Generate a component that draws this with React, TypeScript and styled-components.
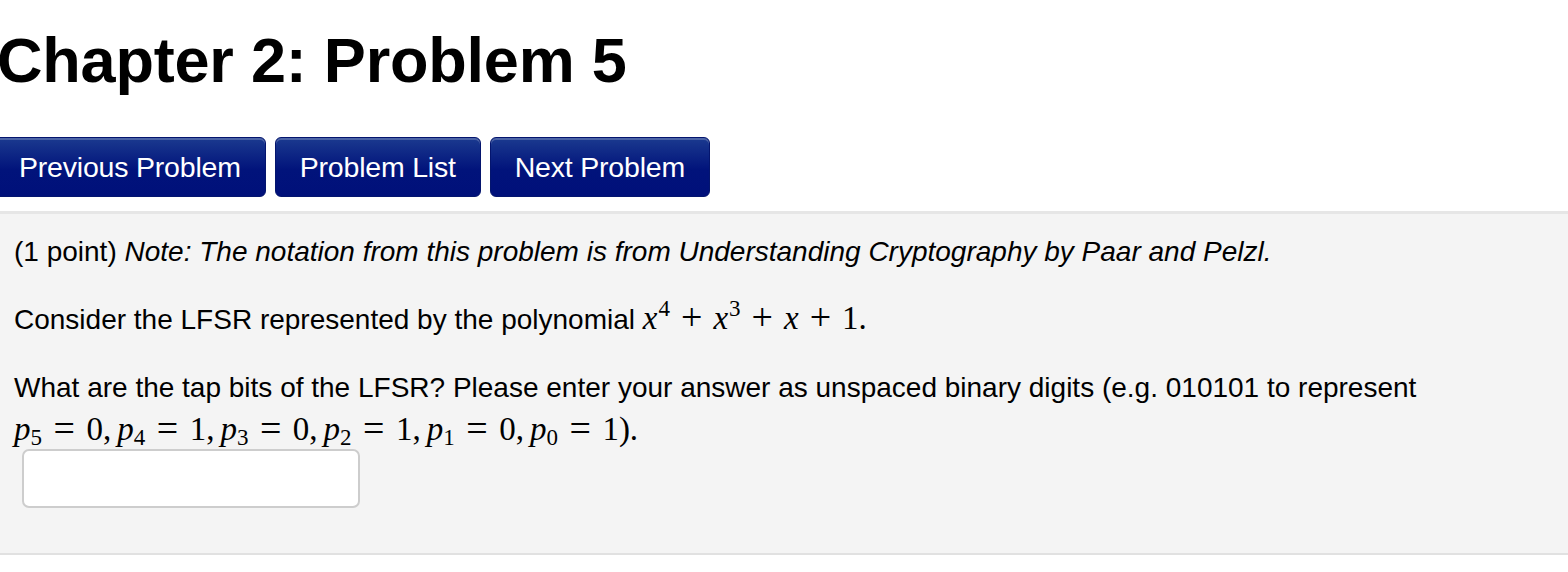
import React from "react";
import styled, { createGlobalStyle } from "styled-components";

const Global = createGlobalStyle`
  html, body { margin: 0; padding: 0; background: #ffffff; }
  body { font-family: "Liberation Sans", Arial, Helvetica, sans-serif; color: #000; overflow: hidden; }
`;

const Page = styled.div`
  width: 1568px;
  height: 572px;
  overflow: hidden;
  background: #fff;
`;

const Heading = styled.h1`
  margin: 0 0 0 -3px;
  padding-top: 22px;
  height: 115px;
  box-sizing: border-box;
  font-size: 63px;
  line-height: 76px;
  font-weight: 700;
  letter-spacing: -0.2px;
`;

const NavBar = styled.nav`
  display: flex;
  gap: 9px;
  margin-left: -6px;
  height: 96px;
  padding-top: 22px;
  box-sizing: border-box;
`;

const NavButton = styled.button`
  height: 60px;
  padding: 0 24px;
  border-radius: 6px;
  border: 1px solid #04156e;
  background: linear-gradient(#1b3a8f, #01137b 55%, #00107a);
  box-shadow: inset 0 2px 0 rgba(255, 255, 255, 0.22);
  color: #fff;
  font-family: "Liberation Sans", Arial, sans-serif;
  font-size: 28.5px;
  letter-spacing: -0.2px;
  cursor: pointer;
`;

const Panel = styled.section`
  background: #f4f4f4;
  border-top: 3px solid #e6e6e6;
  border-bottom: 2px solid #e1e1e1;
  padding: 18px 0 46px 14px;
  height: 344px;
  box-sizing: border-box;
`;

const Para = styled.p`
  margin: 0 0 28px 0;
  font-size: 28px;
  line-height: 40px;
`;

const TightPara = styled(Para)`
  margin-bottom: 0;
`;

const Em = styled.em`
  font-style: italic;
`;

const Math = styled.span<{ $shift?: number }>`
  font-family: "Liberation Serif", "Times New Roman", serif;
  font-size: 33px;
  line-height: 1;
  white-space: nowrap;
  vertical-align: ${(p) => -(p.$shift ?? 0)}px;
`;

const Var = styled.i`
  font-style: italic;
`;

const Sup = styled.sup`
  font-size: 23px;
  vertical-align: 13px;
  line-height: 0;
  margin-left: 1px;
`;

const Sub = styled.sub`
  font-size: 23px;
  vertical-align: -5px;
  line-height: 0;
`;

const Op = styled.span<{ $w?: number }>`
  font-size: 38px;
  line-height: 0;
  vertical-align: -1px;
  margin: 0 ${(p) => p.$w ?? 12}px;
`;

const Comma = styled.span`
  margin-right: 6px;
`;

const AnswerInput = styled.input`
  display: block;
  margin: 1px 0 0 8px;
  width: 338px;
  height: 59px;
  box-sizing: border-box;
  border: 2px solid #cdcdcd;
  border-radius: 7px;
  background: #fff;
  outline: none;
`;

const eqs: [string, string][] = [
  ["5", "0"],
  ["4", "1"],
  ["3", "0"],
  ["2", "1"],
  ["1", "0"],
  ["0", "1"],
];

export default function App() {
  return (
    <Page>
      <Global />
      <Heading>Chapter 2: Problem 5</Heading>
      <NavBar>
        <NavButton>Previous Problem</NavButton>
        <NavButton>Problem List</NavButton>
        <NavButton>Next Problem</NavButton>
      </NavBar>
      <Panel>
        <Para>
          (1 point) <Em>Note: The notation from this problem is from Understanding Cryptography by Paar and Pelzl.</Em>
        </Para>
        <Para>
          Consider the LFSR represented by the polynomial{" "}
          <Math>
            <Var>x</Var>
            <Sup>4</Sup>
            <Op $w={11}>+</Op>
            <Var>x</Var>
            <Sup>3</Sup>
            <Op $w={11}>+</Op>
            <Var>x</Var>
            <Op $w={11}>+</Op>1.
          </Math>
        </Para>
        <TightPara>
          What are the tap bits of the LFSR? Please enter your answer as unspaced binary digits (e.g. 010101 to represent
          <br />
          <Math $shift={3}>
            {eqs.map(([i, v], k) => (
              <React.Fragment key={i}>
                <Var>p</Var>
                <Sub>{i}</Sub>
                <Op $w={11.5}>=</Op>
                {v}
                {k < eqs.length - 1 ? <Comma>,</Comma> : ")."}
              </React.Fragment>
            ))}
          </Math>
        </TightPara>
        <AnswerInput type="text" />
      </Panel>
    </Page>
  );
}
